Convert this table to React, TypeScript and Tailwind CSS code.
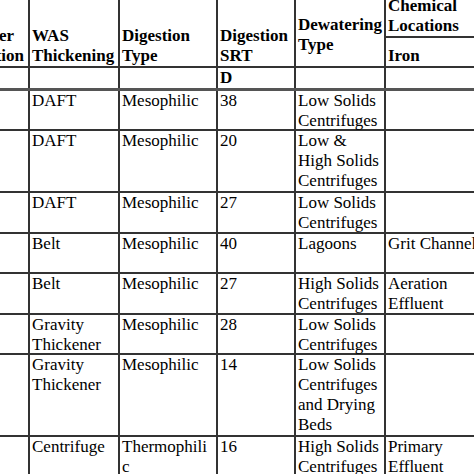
import React from "react";

type Row = {
  h: string;
  was: string[];
  dig: string[];
  srt: string;
  dew: string[];
  iron: string[];
};

const rows: Row[] = [
  { h: "h-[40px]", was: ["DAFT"], dig: ["Mesophilic"], srt: "38", dew: ["Low Solids", "Centrifuges"], iron: [] },
  { h: "h-[62px]", was: ["DAFT"], dig: ["Mesophilic"], srt: "20", dew: ["Low &", "High Solids", "Centrifuges"], iron: [] },
  { h: "h-[41px]", was: ["DAFT"], dig: ["Mesophilic"], srt: "27", dew: ["Low Solids", "Centrifuges"], iron: [] },
  { h: "h-[40px]", was: ["Belt"], dig: ["Mesophilic"], srt: "40", dew: ["Lagoons"], iron: ["Grit Channel"] },
  { h: "h-[41px]", was: ["Belt"], dig: ["Mesophilic"], srt: "27", dew: ["High Solids", "Centrifuges"], iron: ["Aeration", "Effluent"] },
  { h: "h-[40px]", was: ["Gravity", "Thickener"], dig: ["Mesophilic"], srt: "28", dew: ["Low Solids", "Centrifuges"], iron: [] },
  { h: "h-[82px]", was: ["Gravity", "Thickener"], dig: ["Mesophilic"], srt: "14", dew: ["Low Solids", "Centrifuges", "and Drying", "Beds"], iron: [] },
  { h: "h-[60px]", was: ["Centrifuge"], dig: ["Thermophili", "c"], srt: "16", dew: ["High Solids", "Centrifuges"], iron: ["Primary", "Effluent"] },
];

function Lines({ items }: { items: string[] }) {
  // text may run a little past the row line box, as in the source
  return (
    <div className="-mb-[6px]">
      {items.map((t) => (
        <div key={t} className="whitespace-nowrap">
          {t}
        </div>
      ))}
    </div>
  );
}

const cell = "border-2 border-[#333] pl-[2px] pr-[2px] align-top pt-0 leading-[20px]";
const head = "border-2 border-[#333] pl-[2px] pr-[2px] align-bottom text-left font-bold leading-[20px]";
const unit = `${head} border-b-[3px] border-b-[#555]`;

export default function App() {
  return (
    <div className="w-[474px] h-[474px] overflow-hidden bg-white">
      <table className="table-fixed border-collapse w-[587px] -ml-[83px] -mt-[6px] font-['Liberation_Serif',serif] text-[17px] text-black">
        <colgroup>
          <col className="w-[111px]" />
          <col className="w-[90px]" />
          <col className="w-[98px]" />
          <col className="w-[78px]" />
          <col className="w-[90px]" />
          <col className="w-[120px]" />
        </colgroup>
        <thead>
          <tr className="h-[42px]">
            {/* first column is cut off at the left edge, as in the source */}
            <th rowSpan={2} className={`${head} text-right pr-[4px]`}>
              <div className="whitespace-nowrap pr-[10px]">Digester</div>
              <div className="whitespace-nowrap">Configuration</div>
            </th>
            <th rowSpan={2} className={head}>
              <div className="whitespace-nowrap">WAS</div>
              <div className="whitespace-nowrap">Thickening</div>
            </th>
            <th rowSpan={2} className={head}>
              <div className="whitespace-nowrap">Digestion</div>
              <div className="whitespace-nowrap">Type</div>
            </th>
            <th rowSpan={2} className={head}>
              <div className="whitespace-nowrap">Digestion</div>
              <div className="whitespace-nowrap">SRT</div>
            </th>
            <th rowSpan={2} className={`${head} pb-[11px]`}>
              <div className="whitespace-nowrap">Dewatering</div>
              <div className="whitespace-nowrap">Type</div>
            </th>
            <th className={head}>
              <div className="whitespace-nowrap">Chemical</div>
              <div className="whitespace-nowrap">Locations</div>
            </th>
          </tr>
          <tr className="h-[30px]">
            <th className={head}>Iron</th>
          </tr>
          <tr className="h-[20px]">
            <th className={unit} />
            <th className={unit} />
            <th className={unit} />
            <th className={unit}>D</th>
            <th className={unit} />
            <th className={unit} />
          </tr>
        </thead>
        <tbody>
          {rows.map((r, i) => (
            <tr key={i} className={r.h}>
              <td className={cell} />
              <td className={cell}>
                <Lines items={r.was} />
              </td>
              <td className={cell}>
                <Lines items={r.dig} />
              </td>
              <td className={cell}>{r.srt}</td>
              <td className={cell}>
                <Lines items={r.dew} />
              </td>
              <td className={cell}>
                <Lines items={r.iron} />
              </td>
            </tr>
          ))}
        </tbody>
      </table>
    </div>
  );
}
